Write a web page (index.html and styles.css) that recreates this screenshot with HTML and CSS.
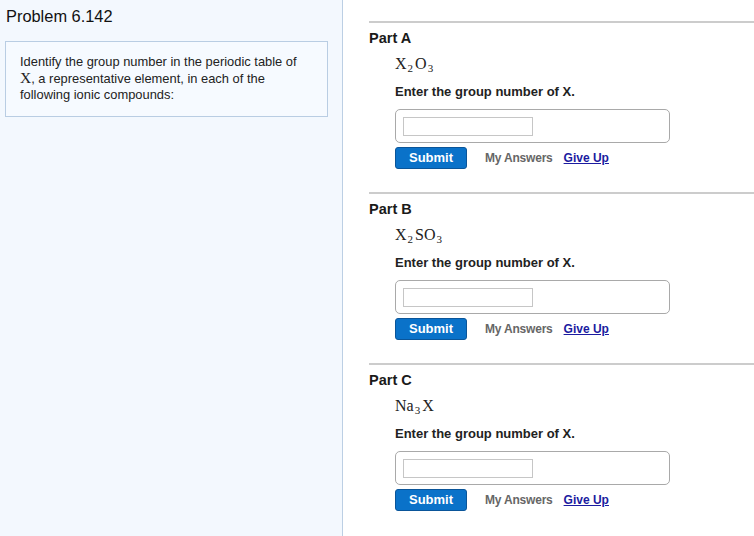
FILE: index.html
```html
<!DOCTYPE html>
<html>
<head>
<meta charset="utf-8">
<link rel="stylesheet" href="styles.css">
</head>
<body>
<div class="page">
  <div class="left">
    <h1 class="title">Problem 6.142</h1>
    <div class="intro">
      Identify the group number in the periodic table of <span class="mx">X</span>, a representative element, in each of the following ionic compounds:
    </div>
  </div>
  <div class="right">
    <div class="part">
      <div class="part-title">Part A</div>
      <div class="formula">X<span class="sb">2</span>O<span class="sb">3</span></div>
      <div class="prompt">Enter the group number of X.</div>
      <div class="answer"><div class="field"></div></div>
      <div class="actions">
        <span class="submit">Submit</span>
        <span class="myans">My Answers</span>
        <span class="giveup">Give Up</span>
      </div>
    </div>
    <div class="part">
      <div class="part-title">Part B</div>
      <div class="formula">X<span class="sb">2</span>SO<span class="sb">3</span></div>
      <div class="prompt">Enter the group number of X.</div>
      <div class="answer"><div class="field"></div></div>
      <div class="actions">
        <span class="submit">Submit</span>
        <span class="myans">My Answers</span>
        <span class="giveup">Give Up</span>
      </div>
    </div>
    <div class="part">
      <div class="part-title">Part C</div>
      <div class="formula">Na<span class="sb">3</span>X</div>
      <div class="prompt">Enter the group number of X.</div>
      <div class="answer"><div class="field"></div></div>
      <div class="actions">
        <span class="submit">Submit</span>
        <span class="myans">My Answers</span>
        <span class="giveup">Give Up</span>
      </div>
    </div>
  </div>
</div>
</body>
</html>
```

FILE: styles.css
```css
html, body {
  margin: 0;
  padding: 0;
  background: #ffffff;
}
body {
  font-family: "Liberation Sans", Arial, sans-serif;
  color: #222;
  width: 754px;
  height: 536px;
  overflow: hidden;
}
.page {
  display: flex;
  height: 536px;
}
.left {
  width: 342px;
  flex: none;
  background: #f3f8fe;
  border-right: 1px solid #bccfe4;
}
.title {
  margin: 0;
  padding: 6px 0 0 6px;
  font-size: 16.4px;
  line-height: 20px;
  font-weight: normal;
  color: #111;
  box-sizing: border-box;
  height: 41px;
}
.intro {
  margin-left: 5px;
  width: 323px;
  box-sizing: border-box;
  height: 76px;
  border: 1px solid #b9cde3;
  background: #f6faff;
  padding: 12px 20px 0 14px;
  font-size: 12.9px;
  line-height: 16px;
  color: #222;
}
.mx {
  font-family: "Liberation Serif", "Times New Roman", serif;
  font-size: 15.5px;
  line-height: 1;
}
.right {
  flex: 1;
  padding: 21px 0 0 26px;
}
.part {
  border-top: 2px solid #cccccc;
  padding-top: 6px;
  margin-bottom: 23px;
}
.part-title {
  font-size: 14.5px;
  font-weight: bold;
  line-height: 18px;
  color: #1a1a1a;
}
.formula {
  margin: 7px 0 0 26px;
  font-family: "Liberation Serif", "Times New Roman", serif;
  font-size: 16px;
  line-height: 20px;
  color: #222;
}
.sb {
  font-size: 11px;
  vertical-align: -2.5px;
  line-height: 0;
  margin: 0 2px 0 1px;
}
.prompt {
  margin: 10px 0 0 26px;
  font-size: 13px;
  font-weight: bold;
  line-height: 16px;
  color: #222;
}
.answer {
  margin: 9px 0 0 26px;
  width: 275px;
  height: 34px;
  box-sizing: border-box;
  border: 1px solid #a9a9a9;
  border-radius: 5px;
  padding: 7px;
  background: #fff;
}
.field {
  width: 130px;
  height: 19px;
  box-sizing: border-box;
  border: 1px solid #c6c6c6;
  background: #fff;
}
.actions {
  margin: 4px 0 0 26px;
  display: flex;
  align-items: center;
  height: 22px;
}
.submit {
  width: 72px;
  height: 22px;
  box-sizing: border-box;
  background: #0a72c9;
  border: 1px solid #0a5599;
  border-radius: 3px;
  color: #fff;
  font-size: 13px;
  font-weight: bold;
  line-height: 20px;
  text-align: center;
}
.myans {
  margin-left: 18px;
  font-size: 12px;
  font-weight: bold;
  color: #666;
  letter-spacing: -0.2px;
}
.giveup {
  margin-left: 11px;
  font-size: 12px;
  font-weight: bold;
  color: #1b1ba0;
  text-decoration: underline;
}
```
